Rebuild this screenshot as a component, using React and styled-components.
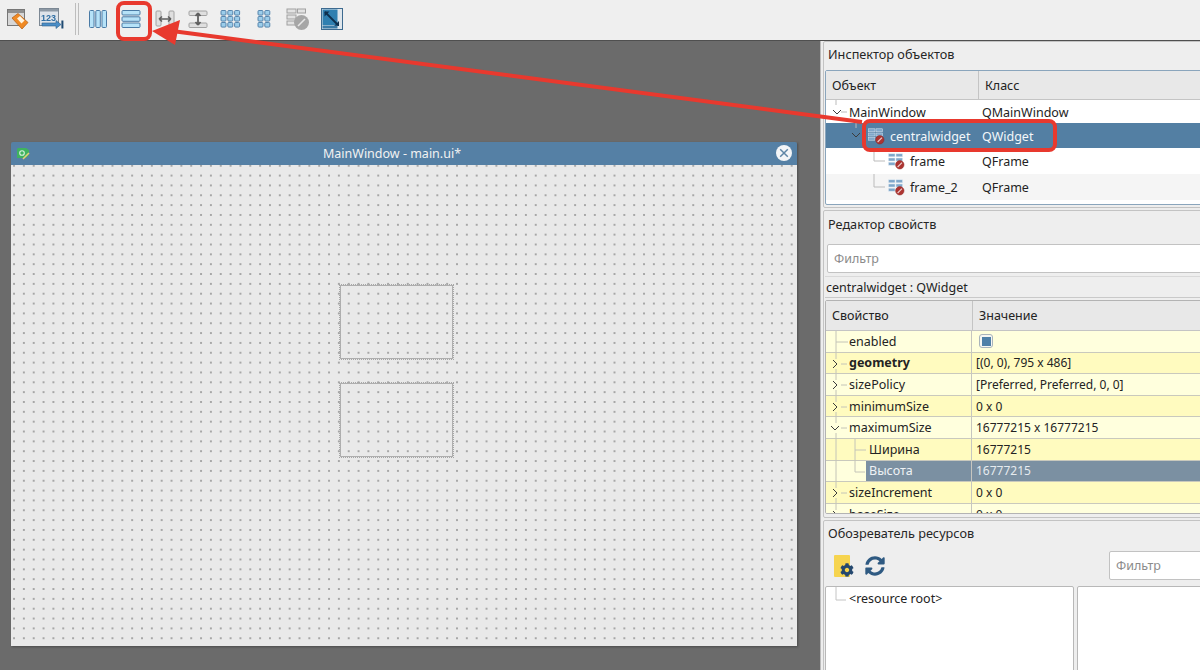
import React from "react";
import styled, { createGlobalStyle } from "styled-components";
import { FaCog, FaSyncAlt } from "react-icons/fa";

const Global = createGlobalStyle`
  html, body { margin: 0; padding: 0; background: #efefef; }
  body { font-family: "Noto Sans", "Open Sans", sans-serif; font-size: 12.5px; color: #232323; }
  * { box-sizing: border-box; }
`;

const Page = styled.div`
  position: relative; width: 1200px; height: 670px; overflow: hidden;
  display: flex; flex-direction: column;
`;
const Toolbar = styled.div`
  height: 41px; flex: none; display: flex; align-items: center; padding: 0 0 2px 1px;
  background: #efefef; border-bottom: 1px solid #4f4f4f;
`;
const ToolButton = styled.div`
  width: 33.4px; height: 30px; flex: none; display: flex; align-items: center; justify-content: center;
  svg { display: block; filter: blur(0.35px); }
`;
const ToolDivider = styled.div`
  width: 4px; height: 32px; flex: none; margin: 0 2px 0 7.5px;
  border-left: 1px solid #bdbdbd; border-right: 1px solid #bdbdbd;
`;
const Body = styled.div`flex: 1; min-height: 0; display: flex;`;
const MdiArea = styled.div`position: relative; width: 820px; flex: none; background: #6b6b6b;`;
const FormWindow = styled.div`
  position: absolute; left: 11px; top: 101px; width: 786px; height: 504px;
  display: flex; flex-direction: column; box-shadow: 1px 1px 2px rgba(40,40,40,.45);
`;
const TitleBar = styled.div`
  position: relative; height: 23px; flex: none; background: #5580a5; color: #f2f2f2;
  display: flex; align-items: center; justify-content: center; padding: 0 24px 1px 0; font-size: 12.5px;
  border-radius: 2px 2px 0 0;
`;
const TitleIcon = styled.svg`position: absolute; left: 5px; top: 5px;`;
const CloseBtn = styled.svg`position: absolute; right: 5px; top: 3px;`;
const FormBody = styled.div`
  flex: 1; padding: 119px 0 0 328px; display: flex; flex-direction: column; gap: 22px;
  background-color: #e9e9e9;
  background-image: radial-gradient(circle, #7c7c7c 0.5px, transparent 1px);
  background-size: 9.85px 9.85px;
  background-position: -1.9px -4.2px;
`;
const FrameBox = styled.div`
  width: 115px; height: 76px; flex: none; border: 1px dotted #a6a6a6; outline: 1px solid #aeaeae; outline-offset: -2px;
`;
const Sidebar = styled.div`
  width: 380px; flex: none; overflow: hidden; background: #ededed; display: flex; flex-direction: column;
  padding: 0 0 0 2px; border-left: 1px solid #bbb; gap: 2px;
`;
const Panel = styled.section`
  width: 410px; height: ${p => p.$h}px; flex: none; border: 1px solid #c3c3c3; border-radius: 2px;
  padding: 0 0 ${p => p.$pb || 0}px 1px; display: flex; flex-direction: column; background: #eeeeee;
`;
const PanelTitle = styled.div`
  height: ${p => p.$h}px; flex: none; display: flex; align-items: center; padding: 0 0 ${p => p.$pb}px 3px; font-size: 12.7px; color: #262626;
`;
const TableFrame = styled.div`
  flex: ${p => p.$fixed ? "none" : 1}; min-height: 0; height: ${p => p.$fixed ? `${p.$fixed}px` : "auto"};
  overflow: hidden; background: #fff; border: 1px solid ${p => p.$focus ? "#8aa5bc" : "#b3b3b3"}; border-radius: 2px;
`;
const HeadRow = styled.div`
  height: ${p => p.$h}px; display: flex; background: #e8e8e8; border-bottom: 1px solid #c4c4c4;
`;
const HeadCell = styled.div`
  width: ${p => p.$w ? `${p.$w}px` : "auto"}; flex: ${p => p.$w ? "none" : 1}; display: flex; align-items: center;
  padding-left: 6px; border-right: ${p => p.$w ? "1px solid #c4c4c4" : "none"}; font-size: 12.5px;
`;
const TreeRow = styled.div`
  position: relative; height: ${p => p.$h}px; padding-top: ${p => p.$pt || 0}px; display: flex; align-items: center;
  background: ${p => p.$sel ? "#537fa3" : p.$alt ? "#f5f5f5" : "#fff"}; color: ${p => p.$sel ? "#f4f7fa" : "#232323"};
`;
const TreeName = styled.div`
  width: 156px; flex: none; height: 100%; display: flex; align-items: center; padding-left: ${p => p.$x}px; gap: 5px;
`;
const Gutter = styled.svg`position: absolute; left: 0; top: 0; overflow: visible;`;
const FilterInput = styled.div`
  height: 29px; flex: none; background: #fff; border: 1px solid #c2c2c2; border-radius: 2px; display: flex; align-items: center;
  padding: 0 0 0 6px; color: #8b8b8b; font-size: 12.5px; margin: ${p => p.$m}; width: ${p => p.$w};
`;
const ClassLabel = styled.div`
  height: 22px; flex: none; margin: 3px 0 2px 0; display: flex; align-items: center; padding: 0 0 0 1px;
  border-top: 1px solid #d9d9d9; border-bottom: 1px solid #c9c9c9; font-size: 12.5px;
`;
const PropRow = styled.div`
  position: relative; height: 21.6px; display: flex; border-bottom: 1px solid #c9c9bd;
  background: ${p => p.$alt ? "#fffbbf" : "#ffffdd"};
`;
const PropName = styled.div`
  width: 146px; flex: none; display: flex; align-items: center; border-right: 1px solid #c6c6c0; padding-left: ${p => p.$x}px;
  font-weight: ${p => p.$bold ? 700 : 400};
`;
const NameFill = styled.div`
  flex: 1; height: 100%; display: flex; align-items: center; padding-left: 3px; margin-left: -3px;
  background: ${p => p.$sel ? "#7b90a2" : "transparent"}; color: ${p => p.$sel ? "#eef2f5" : "inherit"};
`;
const PropValue = styled.div`
  flex: 1; display: flex; align-items: center; padding-left: 4px; font-size: 12px;
  background: ${p => p.$sel ? "#7b90a2" : "transparent"}; color: ${p => p.$sel ? "#e6ebef" : "inherit"};
`;
const Check = styled.div`
  width: 14px; height: 14px; margin-left: 3px; border: 1px solid #a9b4bb; border-radius: 3px; background: #f6f6f2;
  display: flex; align-items: center; justify-content: center;
  &::after { content: ""; width: 9px; height: 9px; background: #4f80a8; }
`;
const ResourceBar = styled.div`
  height: 36px; flex: none; display: flex; align-items: center; padding: 0 0 1px 9px; gap: 15px;
`;
const DocIcon = styled.div`
  position: relative; width: 16px; height: 22px; background: #f6d44f; border-radius: 1px; color: #24486f;
  svg { position: absolute; right: -4px; bottom: 0; }
`;
const SyncIcon = styled(FaSyncAlt)`color: #2f5a82;`;
const Spacer = styled.div`flex: 1;`;
const SplitPanes = styled.div`flex: 1; min-height: 0; display: flex; gap: 3px; margin-top: 2px;`;
const Pane = styled.div`
  position: relative; width: ${p => p.$w}; flex: ${p => p.$w ? "none" : 1}; background: #fff; border: 1px solid #b8b8b8; border-radius: 2px;
  padding: 3px 0 0 23px; font-size: 12.5px;
`;
const Overlay = styled.svg`position: absolute; left: 0; top: 0; pointer-events: none;`;

/* ---------- icons ---------- */
const TabOrderIcon = () => (
  <svg width="24" height="24" viewBox="0 0 24 24">
    <rect x="1.5" y="2.5" width="17" height="16" fill="#d7d7d7" stroke="#777" />
    <rect x="2" y="3" width="16" height="3" fill="#8f8f8f" />
    <path d="M6 11 L12 6.5 L22 15.5 L16 22 Z" fill="#f08a24" stroke="#b8651c" strokeWidth=".8" />
    <path d="M11 11.5l3-2.5 4.5 4.5-3 3z" fill="#fff4df" />
  </svg>
);
const BuddyIcon = () => (
  <svg width="26" height="24" viewBox="0 0 26 24">
    <rect x="1.5" y="1.5" width="19" height="17" fill="#dde3ea" stroke="#7c8894" />
    <rect x="2" y="2" width="18" height="2.5" fill="#8d99a5" />
    <text x="3" y="13.5" fontFamily="Liberation Sans" fontSize="9" fontWeight="700" fill="#2f6ea3">123</text>
    <path d="M4 16h14v-2.5l5 4-5 4V19H4z" fill="#4b8ec7" stroke="#2d5f8b" strokeWidth=".6" />
    <rect x="23.4" y="13.5" width="2" height="8" fill="#1f4a72" />
  </svg>
);
const Bar = ({ x, y, w, h, off }) => (
  <rect x={x} y={y} width={w} height={h} rx="1" fill={off ? "#dfdfdf" : "#b6e2f8"} stroke={off ? "#a2a2a2" : "#4a7aa5"} strokeWidth="1" />
);
const ColumnsIcon = () => (
  <svg width="20" height="22" viewBox="0 0 20 22">
    <Bar x={1.5} y={2.5} w={4.5} h={17} /><Bar x={7.8} y={2.5} w={4.5} h={17} /><Bar x={14} y={2.5} w={4.5} h={17} />
  </svg>
);
const RowsIcon = () => (
  <svg width="20" height="22" viewBox="0 0 20 22">
    <Bar x={1} y={2.5} w={18} h={4.5} /><Bar x={1} y={8.8} w={18} h={4.5} /><Bar x={1} y={15} w={18} h={4.5} />
  </svg>
);
const HSplitIcon = () => (
  <svg width="22" height="22" viewBox="0 0 22 22">
    <Bar x={2} y={3} w={5} h={15} off /><Bar x={15} y={3} w={5} h={15} off />
    <path d="M5 11h12M5 11l3-2.5M5 11l3 2.5M17 11l-3-2.5M17 11l-3 2.5" stroke="#5f5f5f" strokeWidth="1.6" fill="none" />
  </svg>
);
const VSplitIcon = () => (
  <svg width="22" height="22" viewBox="0 0 22 22">
    <Bar x={2} y={3} w={18} h={4.5} off /><Bar x={2} y={15} w={18} h={4.5} off />
    <path d="M11 5v12M11 5L8.5 8M11 5l2.5 3M11 17l-2.5-3M11 17l2.5-3" stroke="#5f5f5f" strokeWidth="1.8" fill="none" />
  </svg>
);
const GridIcon = ({ cols, w }) => (
  <svg width={w} height="22" viewBox={`0 0 ${w} 22`}>
    {Array.from({ length: 9 }).slice(0, cols * 3).map((_, i) => (
      <rect key={i} x={1 + (i % cols) * 6.8} y={2.5 + Math.floor(i / cols) * 6} width="5" height="4.6" rx="1" fill="#9ccdea" stroke="#4a7aa5" strokeWidth=".9" />
    ))}
  </svg>
);
const BreakIcon = () => (
  <svg width="24" height="24" viewBox="0 0 24 24">
    <rect x="1" y="2" width="9" height="4" fill="#e2e2e2" stroke="#a0a0a0" />
    <rect x="11.5" y="2" width="8" height="4" fill="#e2e2e2" stroke="#a0a0a0" />
    <rect x="1" y="8" width="9" height="4" fill="#e2e2e2" stroke="#a0a0a0" />
    <rect x="1" y="14" width="9" height="4" fill="#e2e2e2" stroke="#a0a0a0" />
    <circle cx="15.5" cy="15.5" r="7.5" fill="#a6a6a6" />
    <path d="M12 19l7-7" stroke="#e6e6e6" strokeWidth="1.6" />
  </svg>
);
const AdjustIcon = () => (
  <svg width="22" height="22" viewBox="0 0 22 22">
    <rect x=".5" y=".5" width="21" height="21" fill="#dfe6ec" stroke="#3d6a8f" />
    <rect x="1.5" y="1.5" width="15" height="15.5" fill="#2f7fb0" />
    <path d="M4 4l13 13" stroke="#0e2f4d" strokeWidth="1.8" />
    <path d="M3.5 3.5h5l-5 5zM18 18h-5l5-5z" fill="#0e2f4d" />
    <rect x="1.5" y="17.5" width="15" height="3" fill="#3b7ba6" />
  </svg>
);
const WidgetIcon = () => (
  <svg width="17" height="17" viewBox="0 0 17 17" style={{ flex: "none", filter: "blur(0.25px)" }}>
    <g fill="#7fa7ca" stroke="#dfe9f1" strokeWidth=".5">
      <rect x=".5" y=".8" width="6.5" height="3" /><rect x="8" y=".8" width="6.5" height="3" />
      <rect x=".5" y="5" width="6.5" height="3" /><rect x=".5" y="9.2" width="6.5" height="3" />
      <rect x="8" y="5" width="6.5" height="3" />
    </g>
    <circle cx="11.8" cy="11.8" r="4.2" fill="#ad3431" stroke="#8c2320" strokeWidth=".5" />
    <path d="M9.6 14l4.4-4.4" stroke="#ecd0d0" strokeWidth="1.1" />
  </svg>
);
const Chevron = ({ open, x, y }) => (
  <path d={open ? `M${x - 4} ${y - 2}l4 4 4-4` : `M${x - 2} ${y - 4}l4 4-4 4`} fill="none" stroke="#3c3c3c" strokeWidth="1" />
);

/* ---------- data ---------- */
const toolbarIcons = [
  [<TabOrderIcon key="a" />, <BuddyIcon key="b" />],
  [<ColumnsIcon key="c" />, <RowsIcon key="d" />, <HSplitIcon key="e" />, <VSplitIcon key="f" />,
   <GridIcon key="g" cols={3} w={23} />, <GridIcon key="h" cols={2} w={16} />, <BreakIcon key="i" />, <AdjustIcon key="j" />],
];
const treeRows = [
  { h: 23, pt: 2, x: 23, name: "MainWindow", cls: "QMainWindow", draw: <><path d="M10 0v5M15 12h6" stroke="#bbb" /><Chevron open x={11} y={12} /></> },
  { h: 25, pt: 2, x: 42, name: "centralwidget", cls: "QWidget", sel: true, icon: true, draw: <><path d="M30 0v5" stroke="#bbb" /><Chevron open x={30} y={12} /></> },
  { h: 26, x: 62, name: "frame", cls: "QFrame", icon: true, draw: <path d="M48 0v13M48 13h11" stroke="#bbb" /> },
  { h: 26, x: 62, name: "frame_2", cls: "QFrame", alt: true, icon: true, draw: <path d="M48 0v13M48 13h11" stroke="#bbb" /> },
];
const props = [
  { n: "enabled", check: true, x: 23, draw: <path d="M10 0v22M10 11h12" stroke="#c4c4b8" /> },
  { n: "geometry", v: "[(0, 0), 795 x 486]", alt: true, bold: true, x: 23, draw: <><path d="M10 0v6M10 16v6M15 11h6" stroke="#c4c4b8" /><Chevron x={9} y={11} /></> },
  { n: "sizePolicy", v: "[Preferred, Preferred, 0, 0]", x: 23, draw: <><path d="M10 0v6M10 16v6M15 11h6" stroke="#c4c4b8" /><Chevron x={9} y={11} /></> },
  { n: "minimumSize", v: "0 x 0", alt: true, x: 23, draw: <><path d="M10 0v6M10 16v6M15 11h6" stroke="#c4c4b8" /><Chevron x={9} y={11} /></> },
  { n: "maximumSize", v: "16777215 x 16777215", x: 23, draw: <><path d="M10 0v6M10 16v6M15 11h6" stroke="#c4c4b8" /><Chevron open x={9} y={11} /></> },
  { n: "Ширина", v: "16777215", alt: true, x: 43, draw: <path d="M10 0v22M29 0v22M29 11h11" stroke="#c4c4b8" /> },
  { n: "Высота", v: "16777215", sel: true, x: 43, draw: <path d="M10 0v22M29 0v11M29 11h10" stroke="#c4c4b8" /> },
  { n: "sizeIncrement", v: "0 x 0", alt: true, x: 23, draw: <><path d="M10 0v6M10 16v6M15 11h6" stroke="#c4c4b8" /><Chevron x={9} y={11} /></> },
  { n: "baseSize", v: "0 x 0", x: 23, draw: <><path d="M10 0v6M15 11h6" stroke="#c4c4b8" /><Chevron x={9} y={11} /></> },
];

export default function App() {
  return (
    <Page>
      <Global />
      <Toolbar>
        {toolbarIcons[0].map((ic, i) => <ToolButton key={i}>{ic}</ToolButton>)}
        <ToolDivider />
        {toolbarIcons[1].map((ic, i) => <ToolButton key={i}>{ic}</ToolButton>)}
      </Toolbar>
      <Body>
        <MdiArea>
          <FormWindow>
            <TitleBar>
              <TitleIcon width="15" height="13" viewBox="0 0 15 13">
                <path d="M2 1h8l3 2v5l-3 3H1V2z" fill="#3fb35f" />
                <circle cx="6" cy="6" r="2.3" fill="none" stroke="#d8f2df" strokeWidth="1.1" />
                <path d="M7 12l6-6" stroke="#e3cf7a" strokeWidth="1.6" />
              </TitleIcon>
              MainWindow - main.ui*
              <CloseBtn width="16" height="16" viewBox="0 0 16 16">
                <circle cx="8" cy="8" r="8" fill="#f3f5f7" />
                <path d="M4.2 4.2l7.6 7.6M11.8 4.2l-7.6 7.6" stroke="#5f86a6" strokeWidth="1.5" />
              </CloseBtn>
            </TitleBar>
            <FormBody>
              <FrameBox />
              <FrameBox />
            </FormBody>
          </FormWindow>
        </MdiArea>
        <Sidebar>
          <Panel $h={167}>
            <PanelTitle $h={28} $pb={5}>Инспектор объектов</PanelTitle>
            <TableFrame $fixed={135} $focus>
              <HeadRow $h={29}>
                <HeadCell $w={153}>Объект</HeadCell>
                <HeadCell>Класс</HeadCell>
              </HeadRow>
              {treeRows.map(r => (
                <TreeRow key={r.name} $h={r.h} $pt={r.pt} $sel={r.sel} $alt={r.alt}>
                  <Gutter width="80" height={r.h}>{r.draw}</Gutter>
                  <TreeName $x={r.x}>{r.icon && <WidgetIcon />}{r.name}</TreeName>
                  {r.cls}
                </TreeRow>
              ))}
            </TableFrame>
          </Panel>
          <Panel $h={308} $pb={3}>
            <PanelTitle $h={33} $pb={8}>Редактор свойств</PanelTitle>
            <FilterInput $m="0 0 0 2px" $w="390px">Фильтр</FilterInput>
            <ClassLabel>centralwidget : QWidget</ClassLabel>
            <TableFrame>
              <HeadRow $h={30}>
                <HeadCell $w={147}>Свойство</HeadCell>
                <HeadCell>Значение</HeadCell>
              </HeadRow>
              {props.map(p => (
                <PropRow key={p.n} $alt={p.alt}>
                  <Gutter width="60" height="22">{p.draw}</Gutter>
                  <PropName $x={p.x} $bold={p.bold}>
                    <NameFill $sel={p.sel}>{p.n}</NameFill>
                  </PropName>
                  <PropValue $sel={p.sel}>{p.check ? <Check /> : p.v}</PropValue>
                </PropRow>
              ))}
            </TableFrame>
          </Panel>
          <Panel $h={170}>
            <PanelTitle $h={27} $pb={3}>Обозреватель ресурсов</PanelTitle>
            <ResourceBar>
              <DocIcon><FaCog size={14} /></DocIcon>
              <SyncIcon size={20} />
              <Spacer />
              <FilterInput $m="0 0 0 0" $w="123px">Фильтр</FilterInput>
            </ResourceBar>
            <SplitPanes>
              <Pane $w="249px">
                <Gutter width="24" height="24"><path d="M10 0v13M10 13h10" stroke="#c4c4c4" fill="none" /></Gutter>
                {"<resource root>"}
              </Pane>
              <Pane />
            </SplitPanes>
          </Panel>
        </Sidebar>
      </Body>
      <Overlay width="1200" height="670" viewBox="0 0 1200 670">
        <rect x="118" y="3" width="32" height="36" rx="6" fill="none" stroke="#e8392e" strokeWidth="4" />
        <rect x="864" y="121" width="191" height="29" rx="6" fill="none" stroke="#e8392e" strokeWidth="4" />
        <path d="M862 122L172 31" stroke="#e8392e" strokeWidth="4" fill="none" />
        <path d="M152 31L180 20L175 45Z" fill="#e8392e" />
      </Overlay>
    </Page>
  );
}
